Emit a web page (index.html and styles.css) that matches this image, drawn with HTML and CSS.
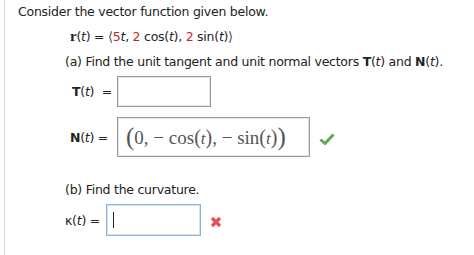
FILE: index.html
```html
<!DOCTYPE html>
<html>
<head>
<meta charset="utf-8">
<link rel="stylesheet" href="styles.css">
</head>
<body>
<div class="question">
  <p class="intro">Consider the vector function given below.</p>
  <div class="indent">
    <p class="eq"><span class="bold-serif">r</span>(<i>t</i>) = <span class="ang">⟨</span><span class="red">5</span><i>t</i>, <span class="red">2</span> cos(<i>t</i>), <span class="red">2</span> sin(<i>t</i>)<span class="ang">⟩</span></p>
    <p class="part">(a) Find the unit tangent and unit normal vectors <b>T</b>(<i>t</i>) and <b>N</b>(<i>t</i>).</p>
    <div class="row row-t">
      <span class="label"><b>T</b>(<i>t</i>) &nbsp;=</span>
      <span class="box box-t"></span>
    </div>
    <div class="row row-n">
      <span class="label"><b>N</b>(<i>t</i>) =</span>
      <span class="box box-n"><span class="math"><span class="big">(</span>0, − cos<span class="paren">(</span><i>t</i><span class="paren">)</span>, − sin<span class="paren">(</span><i>t</i><span class="paren">)</span><span class="big">)</span></span></span>
      <svg class="check" width="16" height="12" viewBox="0 0 16 12"><path d="M1.5 6.5 L6 10.5 L14.5 1.5" fill="none" stroke="#5daa55" stroke-width="3" stroke-linejoin="round"/></svg>
    </div>
    <p class="part part-b">(b) Find the curvature.</p>
    <div class="row row-k">
      <span class="label">κ(<i>t</i>) =</span>
      <span class="box box-k"><span class="cursor"></span></span>
      <svg class="cross" width="12" height="12" viewBox="0 0 12 12"><path d="M2 2 L10 10 M10 2 L2 10" fill="none" stroke="#e5515b" stroke-width="3.2"/></svg>
    </div>
  </div>
</div>
</body>
</html>
```
FILE: styles.css
```css
html, body {
  margin: 0;
  padding: 0;
  background: #fff;
}
body {
  font-family: "DejaVu Sans", Verdana, sans-serif;
  font-size: 12.5px;
  letter-spacing: -0.25px;
  color: #222;
}
.question {
  margin-left: 4px;
  border-left: 1px solid #d4d4d4;
  height: 255px;
  box-sizing: border-box;
  padding: 3px 0 0 13px;
}
p {
  margin: 0;
}
.intro {
  line-height: 18px;
}
.indent {
  padding-left: 47px;
}
.eq {
  margin-top: 6px;
  padding-left: 5px;
  line-height: 18px;
}
.bold-serif {
  font-family: "Liberation Serif", serif;
  font-weight: bold;
  font-size: 15px;
}
.red {
  color: #c1272d;
}
.ang {
  font-family: "DejaVu Sans", sans-serif;
  font-weight: 200;
  color: #444;
}
.part {
  margin-top: 7px;
  line-height: 18px;
  white-space: nowrap;
}
.row {
  display: flex;
  align-items: center;
}
.label {
  white-space: nowrap;
}
.row-t {
  margin-top: 5px;
}
.row-t .label {
  padding-left: 7px;
  width: 45px;
}
.box {
  box-sizing: border-box;
  background: #fff;
}
.box-t {
  width: 94px;
  height: 31px;
  border: 1px solid #9a9a9a;
  box-shadow: inset 0 0 0 1px #e6e6e6;
}
.row-n {
  margin-top: 10px;
}
.row-n .label {
  padding-left: 5px;
  width: 47px;
}
.box-n {
  width: 193px;
  height: 40px;
  border: 1px solid #9a9a9a;
  box-shadow: inset 0 0 0 1px #e6e6e6;
  display: flex;
  align-items: center;
  padding-left: 8px;
}
.math {
  font-family: "Liberation Serif", "DejaVu Serif", serif;
  font-size: 19px;
  letter-spacing: 0;
  color: #555;
  white-space: nowrap;
}
.math i {
  font-size: 17px;
}
.math .big {
  font-size: 25px;
  font-weight: 100;
  vertical-align: -1px;
}
.math .paren {
  font-size: 20px;
}
.check {
  margin-left: 9px;
  margin-top: 3px;
}
.part-b {
  margin-top: 24px;
}
.row-k {
  margin-top: 5px;
}
.row-k .label {
  width: 41px;
}
.box-k {
  width: 95px;
  height: 32px;
  border: 1px solid #8fb2d8;
  box-shadow: inset 0 0 0 1px #d3e2f2;
  display: flex;
  align-items: center;
  padding-left: 6px;
}
.cursor {
  width: 1px;
  height: 16px;
  background: #222;
}
.cross {
  margin-left: 9px;
  margin-top: 4px;
}
```
